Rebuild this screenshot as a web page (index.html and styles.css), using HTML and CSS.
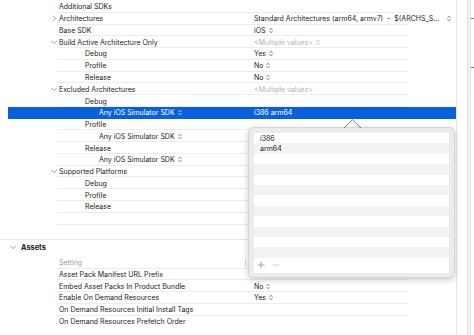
FILE: index.html
```html
<!DOCTYPE html>
<html lang="en">
<head>
    <meta charset="UTF-8">
    <meta name="viewport" content="width=device-width, initial-scale=1.0">
    <title>Build Settings</title>
    <link rel="stylesheet" href="styles.css">
</head>
<body>
    <div class="window">
        <div class="editor">
            <div class="rows">
                <div class="row"><span class="name lv1">Additional SDKs</span><span class="value"></span></div>
                <div class="row"><span class="name lv1 tree"><svg class="disc" width="9" height="7" viewBox="0 0 9 7"><path d="M3 0.8 L5.7 3.5 L3 6.2"/></svg>Architectures</span><span class="value wide">Standard Architectures (arm64, armv7)&nbsp; - &nbsp;$(ARCHS_S...<svg class="pop" width="4" height="7" viewBox="0 0 4 7"><path d="M0.6 2.8 L2 1.3 L3.4 2.8 M0.6 4.2 L2 5.7 L3.4 4.2"/></svg></span></div>
                <div class="row"><span class="name lv1">Base SDK</span><span class="value">iOS<svg class="pop" width="4" height="7" viewBox="0 0 4 7"><path d="M0.6 2.8 L2 1.3 L3.4 2.8 M0.6 4.2 L2 5.7 L3.4 4.2"/></svg></span></div>
                <div class="row"><span class="name lv1 tree"><svg class="disc" width="9" height="7" viewBox="0 0 9 7"><path d="M1.6 2 L4.2 4.6 L6.8 2"/></svg>Build Active Architecture Only</span><span class="value muted">&lt;Multiple values&gt;<svg class="pop" width="4" height="7" viewBox="0 0 4 7"><path d="M0.6 2.8 L2 1.3 L3.4 2.8 M0.6 4.2 L2 5.7 L3.4 4.2"/></svg></span></div>
                <div class="row"><span class="name lv2">Debug</span><span class="value">Yes<svg class="pop" width="4" height="7" viewBox="0 0 4 7"><path d="M0.6 2.8 L2 1.3 L3.4 2.8 M0.6 4.2 L2 5.7 L3.4 4.2"/></svg></span></div>
                <div class="row"><span class="name lv2">Profile</span><span class="value">No<svg class="pop" width="4" height="7" viewBox="0 0 4 7"><path d="M0.6 2.8 L2 1.3 L3.4 2.8 M0.6 4.2 L2 5.7 L3.4 4.2"/></svg></span></div>
                <div class="row"><span class="name lv2">Release</span><span class="value">No<svg class="pop" width="4" height="7" viewBox="0 0 4 7"><path d="M0.6 2.8 L2 1.3 L3.4 2.8 M0.6 4.2 L2 5.7 L3.4 4.2"/></svg></span></div>
                <div class="row"><span class="name lv1 tree"><svg class="disc" width="9" height="7" viewBox="0 0 9 7"><path d="M1.6 2 L4.2 4.6 L6.8 2"/></svg>Excluded Architectures</span><span class="value muted">&lt;Multiple values&gt;</span></div>
                <div class="row"><span class="name lv2">Debug</span><span class="value"></span></div>
                <div class="row sel"><span class="name lv3">Any iOS Simulator SDK<svg class="pop" width="4" height="7" viewBox="0 0 4 7"><path d="M0.6 2.8 L2 1.3 L3.4 2.8 M0.6 4.2 L2 5.7 L3.4 4.2"/></svg></span><span class="value">i386 arm64</span></div>
                <div class="row"><span class="name lv2">Profile</span><span class="value"></span></div>
                <div class="row"><span class="name lv3">Any iOS Simulator SDK<svg class="pop" width="4" height="7" viewBox="0 0 4 7"><path d="M0.6 2.8 L2 1.3 L3.4 2.8 M0.6 4.2 L2 5.7 L3.4 4.2"/></svg></span><span class="value"></span></div>
                <div class="row"><span class="name lv2">Release</span><span class="value"></span></div>
                <div class="row"><span class="name lv3">Any iOS Simulator SDK<svg class="pop" width="4" height="7" viewBox="0 0 4 7"><path d="M0.6 2.8 L2 1.3 L3.4 2.8 M0.6 4.2 L2 5.7 L3.4 4.2"/></svg></span><span class="value"></span></div>
                <div class="row"><span class="name lv1 tree"><svg class="disc" width="9" height="7" viewBox="0 0 9 7"><path d="M1.6 2 L4.2 4.6 L6.8 2"/></svg>Supported Platforms</span><span class="value"></span></div>
                <div class="row"><span class="name lv2">Debug</span><span class="value"></span></div>
                <div class="row"><span class="name lv2">Profile</span><span class="value"></span></div>
                <div class="row"><span class="name lv2">Release</span><span class="value"></span></div>
                <div class="row"><span class="name lv2"></span><span class="value"></span></div>
            </div>

            <div class="section-head"><svg class="disc" width="9" height="7" viewBox="0 0 9 7"><path d="M1.6 2 L4.2 4.6 L6.8 2"/></svg>Assets</div>
            <div class="rows">
                <div class="row head"><span class="name lv1">Setting</span><span class="value"></span></div>
                <div class="row"><span class="name lv1">Asset Pack Manifest URL Prefix</span><span class="value"></span></div>
                <div class="row"><span class="name lv1">Embed Asset Packs In Product Bundle</span><span class="value">No<svg class="pop" width="4" height="7" viewBox="0 0 4 7"><path d="M0.6 2.8 L2 1.3 L3.4 2.8 M0.6 4.2 L2 5.7 L3.4 4.2"/></svg></span></div>
                <div class="row"><span class="name lv1">Enable On Demand Resources</span><span class="value">Yes<svg class="pop" width="4" height="7" viewBox="0 0 4 7"><path d="M0.6 2.8 L2 1.3 L3.4 2.8 M0.6 4.2 L2 5.7 L3.4 4.2"/></svg></span></div>
                <div class="row"><span class="name lv1">On Demand Resources Initial Install Tags</span><span class="value"></span></div>
                <div class="row last"><span class="name lv1">On Demand Resources Prefetch Order</span><span class="value"></span></div>
            </div>

            <!-- popover sobre a lista -->
            <div class="popover">
                <svg class="pop-arrow" width="17" height="9" viewBox="0 0 17 9"><path d="M0 9 L8.5 0.8 L17 9" fill="#ececec" stroke="#d4d4d4" stroke-width="1"/></svg>
                <div class="pop-list">
                    <div class="pop-row">i386</div>
                    <div class="pop-row">arm64</div>
                    <div class="pop-row"></div>
                    <div class="pop-row"></div>
                    <div class="pop-row"></div>
                    <div class="pop-row"></div>
                    <div class="pop-row"></div>
                    <div class="pop-row"></div>
                    <div class="pop-row"></div>
                    <div class="pop-row"></div>
                    <div class="pop-row"></div>
                    <div class="pop-row"></div>
                    <div class="pop-bar">
                        <svg width="8" height="8" viewBox="0 0 8 8"><path d="M4 0.5 V7.5 M0.5 4 H7.5"/></svg>
                        <svg class="off" width="8" height="8" viewBox="0 0 8 8"><path d="M0.5 4 H7.5"/></svg>
                    </div>
                </div>
            </div>
        </div>
        <div class="side">
            <div class="side-gap"></div>
            <div class="side-edge"></div>
            <div class="side-panel">
                <span class="tick"></span>
                <span class="tick low"></span>
            </div>
        </div>
    </div>
</body>
</html>
```

FILE: styles.css
```css
body {
    margin: 0;
    font-family: Inter, "Liberation Sans", sans-serif;
    font-size: 7px;
    color: #222;
    background-color: #fff;
}

.window {
    display: flex;
    width: 474px;
    height: 335px;
    overflow: hidden;
}

.editor {
    position: relative;
    width: 456px;
    padding-top: 1px;
    border-right: 1px solid #e8e8e8;
}

.rows {
    display: flex;
    flex-direction: column;
}

.row {
    position: relative;
    display: grid;
    grid-template-columns: 246px 1fr;
    align-items: center;
    height: 11.78px;
    margin-left: 8px;
    white-space: nowrap;
}

.row::after {
    content: "";
    position: absolute;
    left: 49px;
    width: 351px;
    bottom: 0;
    height: 1px;
    background-color: #ededed;
}

.row.sel {
    background-color: #0a60d8;
    color: #fff;
}

.row.sel::after,
.row.last::after {
    display: none;
}

.name,
.value {
    display: flex;
    align-items: center;
    gap: 3px;
}

.lv1 { padding-left: 51px; }
.lv1.tree { padding-left: 42px; gap: 0; }
.lv2 { padding-left: 77px; }
.lv3 { padding-left: 91px; }

.value.wide {
    gap: 8px;
}

.muted {
    color: #b3b3b3;
}

svg path {
    fill: none;
    stroke: #555;
    stroke-width: 0.8;
}

.muted svg path {
    stroke: #b3b3b3;
}

.sel svg path {
    stroke: #fff;
}

.disc path {
    stroke: #8c8c8c;
    stroke-width: 0.9;
}

.section-head {
    display: flex;
    align-items: center;
    height: 16px;
    margin-top: 14px;
    padding-left: 9px;
    border-top: 1px solid #e6e6e6;
    font-weight: 700;
    font-size: 7.4px;
    gap: 3px;
}

.row.head {
    height: 13px;
    color: #9c9c9c;
}

.row.head .value {
    border-left: 1px solid #dcdcdc;
    height: 9px;
    margin-left: -9px;
}

.popover {
    position: absolute;
    left: 248px;
    top: 127px;
    width: 207px;
    height: 151px;
    box-sizing: border-box;
    padding: 5px 5px 4px 5px;
    background-color: #ececec;
    border: 1px solid #d4d4d4;
    border-radius: 6px;
    box-shadow: 0 2px 6px rgba(0, 0, 0, 0.2);
}

.pop-arrow {
    position: absolute;
    top: -9px;
    left: 95px;
}

.pop-list {
    display: flex;
    flex-direction: column;
    height: 100%;
    background-color: #fff;
}

.pop-row {
    display: flex;
    align-items: center;
    height: 10.4px;
    padding-left: 6px;
    flex-shrink: 0;
}

.pop-row:nth-child(even) {
    background-color: #f3f3f3;
}

.pop-bar {
    display: flex;
    align-items: center;
    gap: 7px;
    flex: 1;
    padding-left: 3px;
}

.pop-bar path {
    stroke: #8e8e8e;
}

.pop-bar .off path {
    stroke: #c8c8c8;
}

.side {
    flex: 1;
    display: flex;
}

.side-gap {
    width: 10px;
}

.side-edge {
    width: 2px;
    border-left: 1px solid #dedede;
    border-right: 1px solid #e6e6e6;
    background-color: #f3f3f3;
}

.side-panel {
    flex: 1;
    display: flex;
    flex-direction: column;
    gap: 48px;
    padding-top: 18px;
}

.tick {
    width: 3px;
    height: 1px;
    background-color: #777;
}
```
